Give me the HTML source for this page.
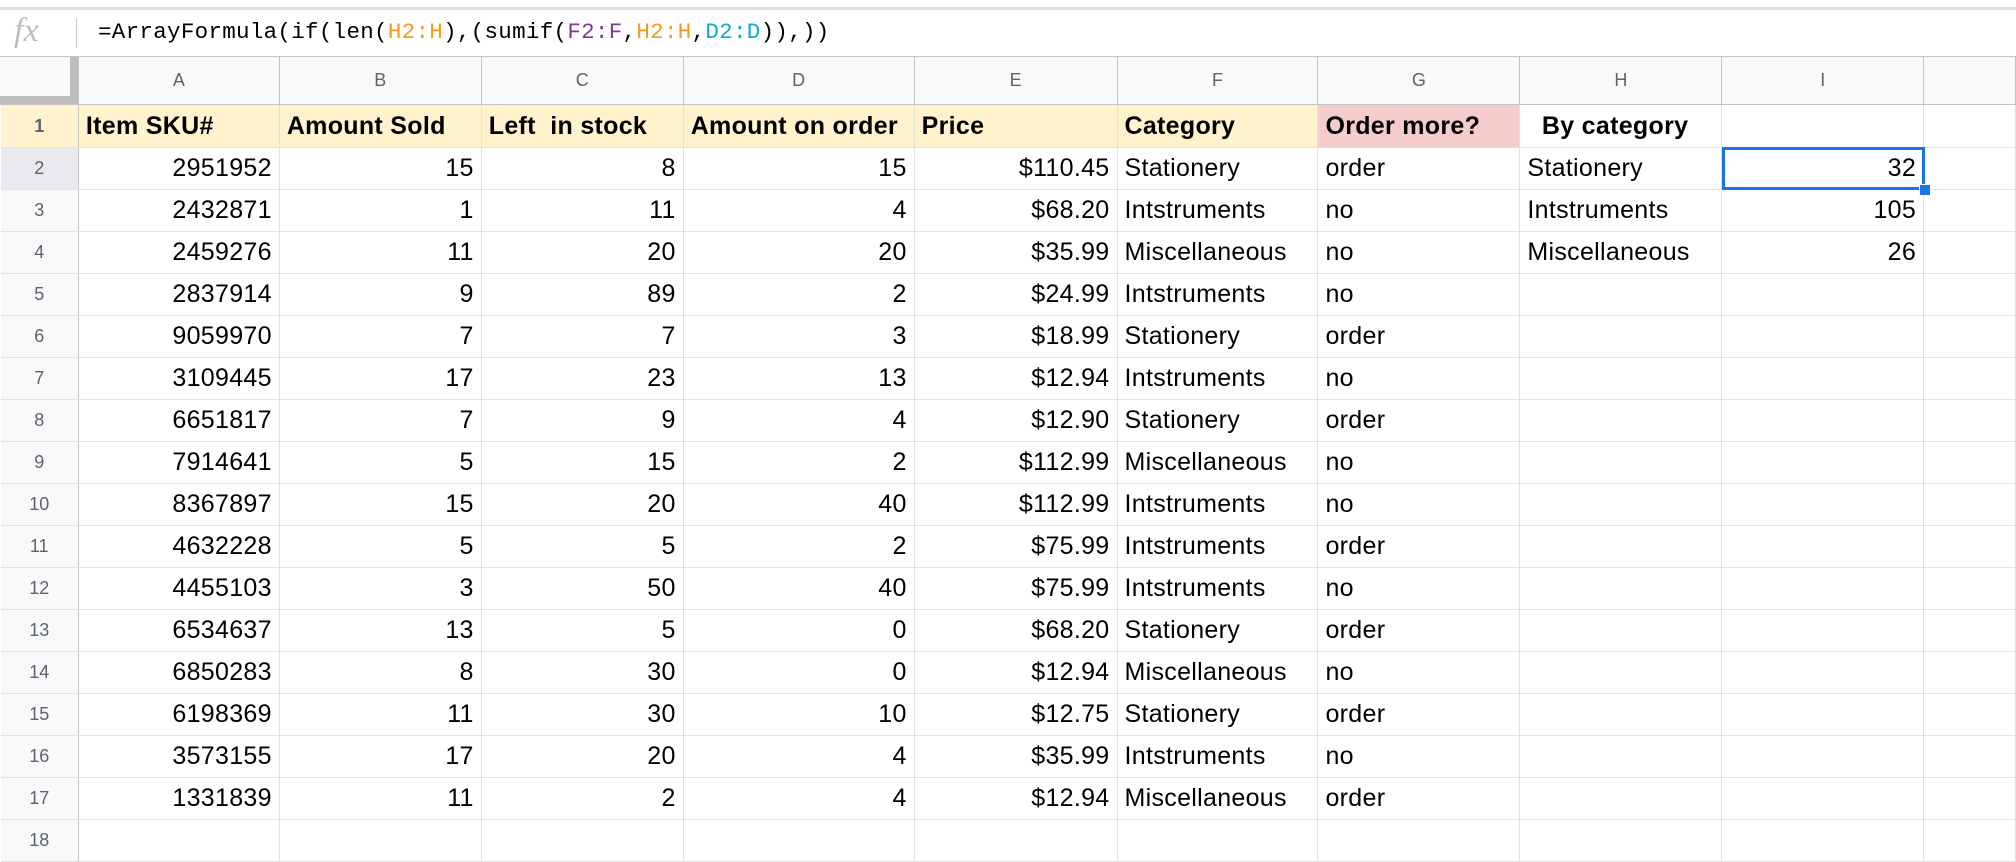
<!DOCTYPE html>
<html><head><meta charset="utf-8"><style>
body{margin:0;width:2016px;height:826px;overflow:hidden;background:#fff;font-family:"Liberation Sans",Arial,sans-serif;position:relative}
.fb{position:absolute;left:0;width:2016px;border-top:3px solid #dadce0;box-sizing:border-box;top:7px;height:50px}
.fx{position:absolute;left:14px;top:2px;font-family:"Liberation Serif",serif;font-style:italic;font-size:34px;color:#bdbdbd}
.sep{position:absolute;left:76px;top:8px;width:1px;height:30px;background:#c8c8c8}
.fm{position:absolute;left:98px;top:9px;font-family:"Liberation Mono",monospace;font-size:22.5px;color:#000;letter-spacing:0.3px}
.o{color:#f7981d}.p{color:#7e3794}.b{color:#11a9cc}
table{position:absolute;left:0;top:56px;border-collapse:collapse;table-layout:fixed;font-size:25px;letter-spacing:0.3px}
td{border:1px solid #e2e2e2;height:42px;padding:0 7px;white-space:nowrap;overflow:hidden;box-sizing:border-box}
tr.h td{background:#f8f9fa;border:1px solid #c4c4c4;color:#5f6368;font-size:18px;text-align:center;height:48px;letter-spacing:0}
td.r{background:#f8f9fa;border-right:1px solid #c4c4c4;border-left:none;color:#5f6368;font-size:18px;text-align:center;letter-spacing:0}
td.sel{background:#e8eaed}
.n{text-align:right}
tr.t td{font-weight:bold;background:#fff2cc;height:43px}
tr.t td.g{background:#f4cccc}
tr.t td.w{background:#fff}
.corner{position:absolute;left:0;top:57px;height:47px;border-right:8px solid #bdbdbd;border-bottom:8px solid #bdbdbd;box-sizing:border-box;background:#f8f9fa;width:78px}
.selbox{position:absolute;left:1722px;top:147px;width:203px;height:43px;border:3px solid #1a73e8;box-sizing:border-box}
.hd{position:absolute;left:1919px;top:184px;width:10px;height:10px;background:#1a73e8;border:1px solid #fff}
</style></head><body>
<div class="fb"><span class="fx">fx</span><div class="sep"></div><div class="fm">=ArrayFormula(if(len(<span class="o">H2:H</span>),(sumif(<span class="p">F2:F</span>,<span class="o">H2:H</span>,<span class="b">D2:D</span>)),))</div></div>
<table>
<colgroup><col style="width:78px"><col style="width:201px"><col style="width:202px"><col style="width:202px"><col style="width:231px"><col style="width:203px"><col style="width:201px"><col style="width:202px"><col style="width:202px"><col style="width:202px"><col style="width:92px"></colgroup>
<tr class="h"><td></td><td>A</td><td>B</td><td>C</td><td>D</td><td>E</td><td>F</td><td>G</td><td>H</td><td class="sel">I</td><td></td></tr>
<tr class="t"><td class="r">1</td><td>Item SKU#</td><td>Amount Sold</td><td>Left &nbsp;in stock</td><td>Amount on order</td><td>Price</td><td>Category</td><td class="g">Order more?</td><td class="w">&nbsp; By category</td><td class="w"></td><td class="w"></td></tr>
<tr><td class="r sel">2</td><td class="n">2951952</td><td class="n">15</td><td class="n">8</td><td class="n">15</td><td class="n">$110.45</td><td>Stationery</td><td>order</td><td>Stationery</td><td class="n">32</td><td></td></tr>
<tr><td class="r">3</td><td class="n">2432871</td><td class="n">1</td><td class="n">11</td><td class="n">4</td><td class="n">$68.20</td><td>Intstruments</td><td>no</td><td>Intstruments</td><td class="n">105</td><td></td></tr>
<tr><td class="r">4</td><td class="n">2459276</td><td class="n">11</td><td class="n">20</td><td class="n">20</td><td class="n">$35.99</td><td>Miscellaneous</td><td>no</td><td>Miscellaneous</td><td class="n">26</td><td></td></tr>
<tr><td class="r">5</td><td class="n">2837914</td><td class="n">9</td><td class="n">89</td><td class="n">2</td><td class="n">$24.99</td><td>Intstruments</td><td>no</td><td></td><td></td><td></td></tr>
<tr><td class="r">6</td><td class="n">9059970</td><td class="n">7</td><td class="n">7</td><td class="n">3</td><td class="n">$18.99</td><td>Stationery</td><td>order</td><td></td><td></td><td></td></tr>
<tr><td class="r">7</td><td class="n">3109445</td><td class="n">17</td><td class="n">23</td><td class="n">13</td><td class="n">$12.94</td><td>Intstruments</td><td>no</td><td></td><td></td><td></td></tr>
<tr><td class="r">8</td><td class="n">6651817</td><td class="n">7</td><td class="n">9</td><td class="n">4</td><td class="n">$12.90</td><td>Stationery</td><td>order</td><td></td><td></td><td></td></tr>
<tr><td class="r">9</td><td class="n">7914641</td><td class="n">5</td><td class="n">15</td><td class="n">2</td><td class="n">$112.99</td><td>Miscellaneous</td><td>no</td><td></td><td></td><td></td></tr>
<tr><td class="r">10</td><td class="n">8367897</td><td class="n">15</td><td class="n">20</td><td class="n">40</td><td class="n">$112.99</td><td>Intstruments</td><td>no</td><td></td><td></td><td></td></tr>
<tr><td class="r">11</td><td class="n">4632228</td><td class="n">5</td><td class="n">5</td><td class="n">2</td><td class="n">$75.99</td><td>Intstruments</td><td>order</td><td></td><td></td><td></td></tr>
<tr><td class="r">12</td><td class="n">4455103</td><td class="n">3</td><td class="n">50</td><td class="n">40</td><td class="n">$75.99</td><td>Intstruments</td><td>no</td><td></td><td></td><td></td></tr>
<tr><td class="r">13</td><td class="n">6534637</td><td class="n">13</td><td class="n">5</td><td class="n">0</td><td class="n">$68.20</td><td>Stationery</td><td>order</td><td></td><td></td><td></td></tr>
<tr><td class="r">14</td><td class="n">6850283</td><td class="n">8</td><td class="n">30</td><td class="n">0</td><td class="n">$12.94</td><td>Miscellaneous</td><td>no</td><td></td><td></td><td></td></tr>
<tr><td class="r">15</td><td class="n">6198369</td><td class="n">11</td><td class="n">30</td><td class="n">10</td><td class="n">$12.75</td><td>Stationery</td><td>order</td><td></td><td></td><td></td></tr>
<tr><td class="r">16</td><td class="n">3573155</td><td class="n">17</td><td class="n">20</td><td class="n">4</td><td class="n">$35.99</td><td>Intstruments</td><td>no</td><td></td><td></td><td></td></tr>
<tr><td class="r">17</td><td class="n">1331839</td><td class="n">11</td><td class="n">2</td><td class="n">4</td><td class="n">$12.94</td><td>Miscellaneous</td><td>order</td><td></td><td></td><td></td></tr>
<tr><td class="r">18</td><td></td><td></td><td></td><td></td><td></td><td></td><td></td><td></td><td></td><td></td></tr>
</table>
<div class="corner"></div>
<div class="selbox"></div><div class="hd"></div>
</body></html>
